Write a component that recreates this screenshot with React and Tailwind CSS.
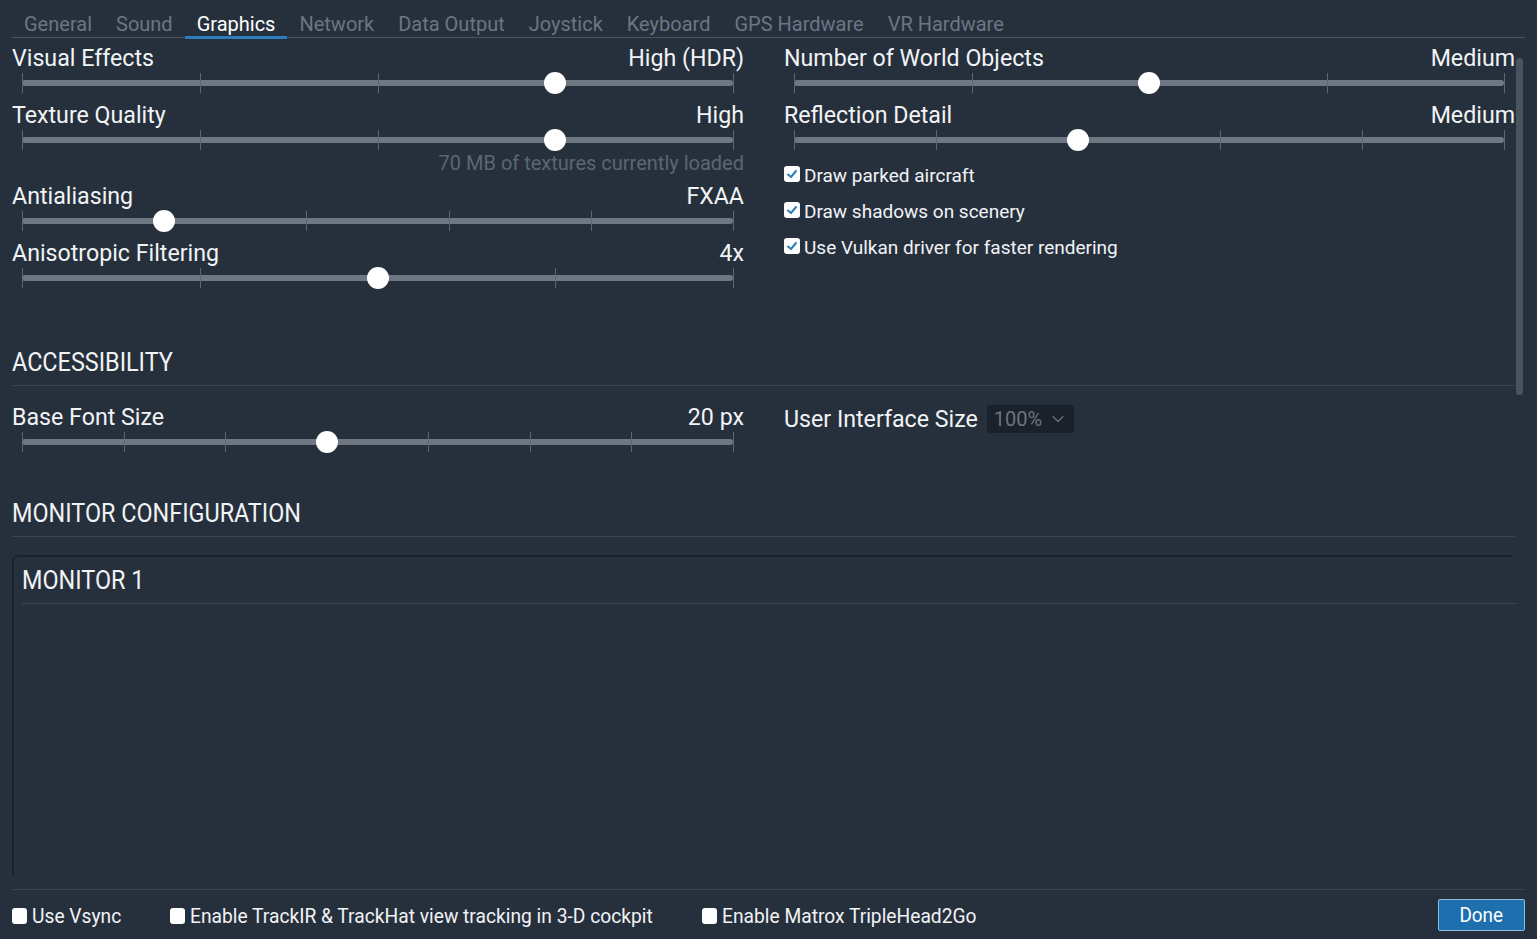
import React from 'react';
import { ChevronDown } from 'lucide-react';

const cond = 'inline-block origin-left scale-x-[0.9] whitespace-nowrap';
const condBottom = 'inline-block origin-left scale-x-[0.915] whitespace-nowrap';

const tabs = ['General', 'Sound', 'Graphics', 'Network', 'Data Output', 'Joystick', 'Keyboard', 'GPS Hardware', 'VR Hardware'];

const Slider = ({ label, value, ticks, pos, note, className = '' }) => (
  <div className={className}>
    <div className="flex justify-between h-[26px] leading-[26px] text-[23.2px] text-[#f1f3f5]">
      <span>{label}</span>
      <span>{value}</span>
    </div>
    <div className="relative h-[24px]">
      <div className="absolute left-[10px] right-[11px] top-0 h-full">
        <div className="absolute left-0 right-0 top-[9px] h-[6px] rounded-full bg-[#6f7882]" />
        {Array.from({ length: ticks }).map((_, i) => (
          <div
            key={i}
            className="absolute top-[2px] h-[20px] w-px bg-[#5d6772]"
            style={{ left: `${(i / (ticks - 1)) * 100}%` }}
          />
        ))}
        <div
          className="absolute top-[1px] w-[22px] h-[22px] -translate-x-1/2 rounded-full bg-white"
          style={{ left: `${pos * 100}%` }}
        />
      </div>
    </div>
    {note && (
      <div className="h-[22px] leading-[22px] text-right text-[20px] text-[#5c6672]">{note}</div>
    )}
  </div>
);

const Check = ({ checked }) => (
  <span className="w-[16px] h-[16px] rounded-[3px] bg-white flex items-center justify-center shrink-0">
    {checked && (
      <svg width="12" height="12" viewBox="0 0 12 12">
        <polyline points="2,6.5 5,9 10,3" fill="none" stroke="#2a7db6" strokeWidth="2" strokeLinecap="round" strokeLinejoin="round" />
      </svg>
    )}
  </span>
);

const Heading = ({ children, className = '' }) => (
  <div className={`mx-3 mr-[22px] pb-[8px] border-b border-[#3c4653] h-[39px] leading-[30px] text-[26px] text-[#f1f3f5] ${className}`}>
    <span className={cond}>{children}</span>
  </div>
);

const BoxItem = ({ label, className = '' }) => (
  <div className={`flex items-center gap-[5px] text-[21px] pt-[3px] ${className}`}>
    <span className="w-[15px] h-[16px] rounded-[3px] bg-white shrink-0 -mt-[2px]" />
    <span className={condBottom}>{label}</span>
  </div>
);

export default function App() {
  return (
    <div className="relative w-full h-[939px] overflow-hidden bg-[#26303d] font-['Roboto',sans-serif] text-[#f1f3f5]">
      {/* tab bar */}
      <div className="mx-3 flex h-[38px] border-b border-[#4b5562]">
        {tabs.map((t) => (
          <div
            key={t}
            className={`relative px-3 pt-[11px] leading-[26px] text-[20px] ${t === 'Graphics' ? 'text-white' : 'text-[#6b7583]'}`}
          >
            {t}
            {t === 'Graphics' && <div className="absolute left-0 right-0 bottom-[-2px] h-[3px] bg-[#2b7dbd]" />}
          </div>
        ))}
      </div>

      <div className="mt-[7px] ml-3 grid grid-cols-[732px_731px] gap-x-10">
        <div>
          <Slider label="Visual Effects" value="High (HDR)" ticks={5} pos={0.75} />
          <Slider className="mt-[7px]" label="Texture Quality" value="High" ticks={5} pos={0.75} note="70 MB of textures currently loaded" />
          <Slider className="mt-[9px]" label="Antialiasing" value="FXAA" ticks={6} pos={0.2} />
          <Slider className="mt-[7px]" label="Anisotropic Filtering" value="4x" ticks={5} pos={0.5} />
        </div>
        <div>
          <Slider label="Number of World Objects" value="Medium" ticks={5} pos={0.5} />
          <Slider className="mt-[7px]" label="Reflection Detail" value="Medium" ticks={6} pos={0.4} />
          <div className="mt-[6px]">
            {['Draw parked aircraft', 'Draw shadows on scenery', 'Use Vulkan driver for faster rendering'].map((c) => (
              <div key={c} className="h-9 flex items-center gap-[4px] text-[19px]">
                <span className="-mt-[4px]"><Check checked /></span>
                <span>{c}</span>
              </div>
            ))}
          </div>
        </div>
      </div>

      <Heading className="mt-[57px]">ACCESSIBILITY</Heading>

      <div className="mt-[18px] ml-3 grid grid-cols-[732px_731px] gap-x-10">
        <Slider label="Base Font Size" value="20 px" ticks={8} pos={3 / 7} />
        <div className="pt-[1px] flex items-start gap-[9px]">
          <span className="h-[28px] leading-[28px] text-[23.2px]">User Interface Size</span>
          <div className="h-[28px] w-[87px] rounded-[2px] bg-[#1b212a] flex items-center justify-between pl-[7px] pr-[6px] text-[20px] text-[#6b7380]">
            <span>100%</span>
            <ChevronDown className="w-[20px] h-[20px]" strokeWidth={1.3} />
          </div>
        </div>
      </div>

      <Heading className="mt-[44px]">MONITOR CONFIGURATION</Heading>

      <div className="mt-[18px] ml-3 w-[1500px] h-[320px] border-t-2 border-l-2 border-[#1b222c] rounded-tl-[6px]">
        <div className="ml-2 w-[1495px] pt-[8px] pb-[8px] border-b border-[#3c4653] h-[47px] leading-[30px] text-[26px]">
          <span className={cond}>MONITOR 1</span>
        </div>
      </div>

      <div className="mt-[14px] mx-3 w-[1513px] border-t border-[#3c4653] pt-[9px] flex items-center h-[42px]">
        <BoxItem className="w-[158px]" label="Use Vsync" />
        <BoxItem className="w-[532px]" label="Enable TrackIR & TrackHat view tracking in 3-D cockpit" />
        <BoxItem className="flex-1" label="Enable Matrox TripleHead2Go" />
        <button className="w-[87px] h-[32px] rounded-[2px] bg-[#1e6fae] border border-[#8dbfe3] text-white text-[21px] leading-none flex items-center justify-center">
          <span className="inline-block scale-x-[0.9]">Done</span>
        </button>
      </div>

      <div className="absolute left-[1516px] top-[58px] w-[7px] h-[337px] rounded-full bg-[#4a5461]" />
    </div>
  );
}
